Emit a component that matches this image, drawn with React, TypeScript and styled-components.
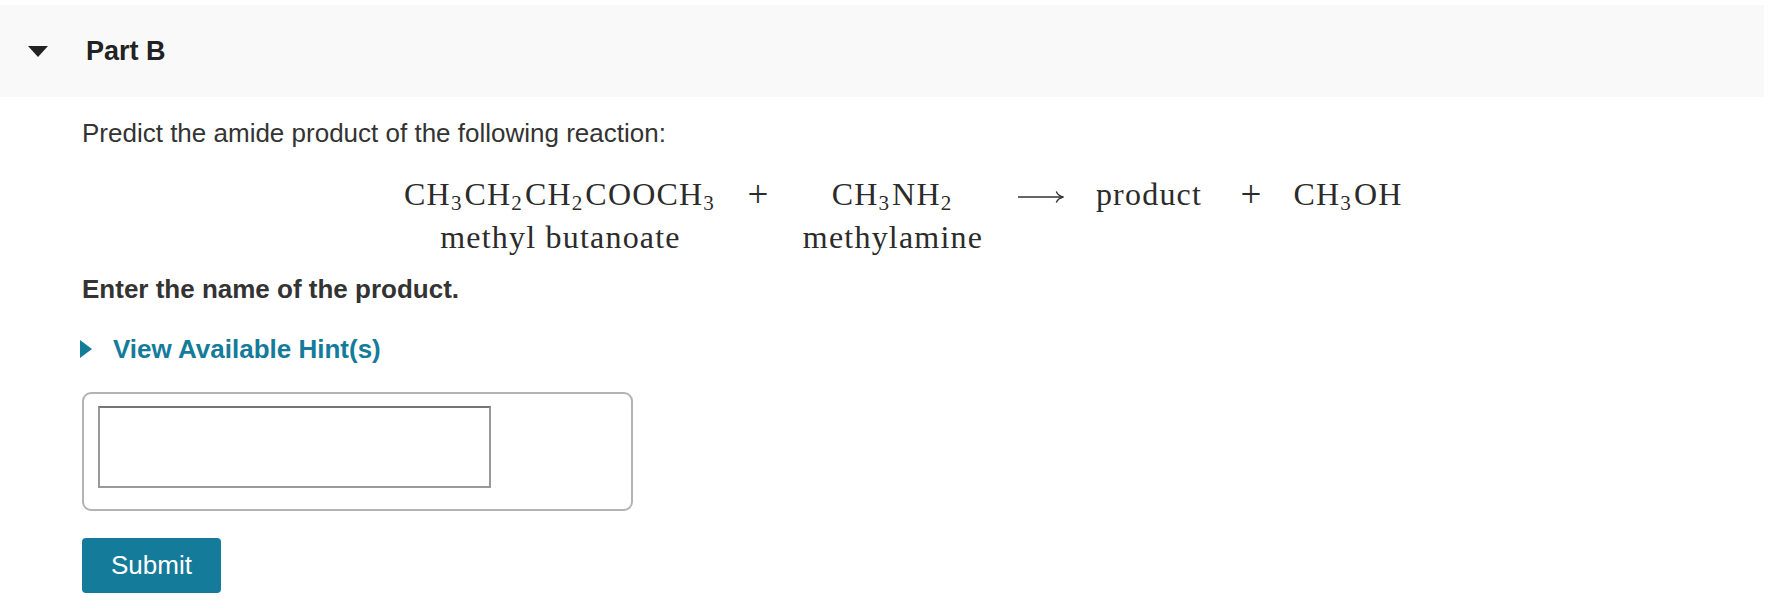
import React from 'react';
import styled, {createGlobalStyle} from 'styled-components';

const GlobalStyle = createGlobalStyle`
  html, body {
    margin: 0;
    padding: 0;
    background: #fff;
  }
  body {
    font-family: "Liberation Sans", Arial, Helvetica, sans-serif;
    color: #333;
  }
`;

const Page = styled.div`
  width: 1764px;
  padding-top: 5px;
`;

const PartHeader = styled.div`
  display: flex;
  align-items: center;
  height: 92px;
  padding-left: 28px;
  background: #f9f9f9;
`;

const Caret = styled.span<{$dir: 'down' | 'right'; $color: string}>`
  display: inline-block;
  width: 0;
  height: 0;
  flex: none;
  ${({$dir, $color}) =>
    $dir === 'down'
      ? `
    border-left: 10px solid transparent;
    border-right: 10px solid transparent;
    border-top: 11px solid ${$color};
  `
      : `
    border-top: 9.5px solid transparent;
    border-bottom: 9.5px solid transparent;
    border-left: 12px solid ${$color};
  `}
`;

const PartTitle = styled.h2`
  margin: 0 0 0 38px;
  font-size: 27px;
  line-height: 31px;
  font-weight: bold;
  color: #222;
`;

const Body = styled.div`
  padding: 21px 0 0 82px;
`;

const Prompt = styled.p<{$bold?: boolean; $gap?: number}>`
  margin: ${({$gap}) => $gap ?? 0}px 0 0;
  font-size: 26px;
  line-height: 30px;
  font-weight: ${({$bold}) => ($bold ? 'bold' : 'normal')};
  color: #333;
`;

const Reaction = styled.div`
  display: grid;
  grid-template-columns: 335px 60px 210px 85px 132px 72px 122px;
  grid-template-rows: 43px 43px;
  justify-items: center;
  margin: 25px 0 0 311px;
  font-family: "Liberation Serif", "Times New Roman", serif;
  font-size: 32px;
  line-height: 43px;
  letter-spacing: 1.2px;
  color: #2b2b2b;
`;

const Term = styled.span<{$col: number; $row?: number}>`
  grid-column: ${({$col}) => $col};
  grid-row: ${({$row}) => $row ?? 1};
  white-space: nowrap;
`;

const Plus = styled(Term)`
  font-size: 37px;
  letter-spacing: 0;
`;

const Sub = styled.sub`
  font-size: 0.66em;
  vertical-align: -0.22em;
  line-height: 0;
  letter-spacing: 0;
  margin-right: 3px;
`;

const ArrowIcon = styled.svg`
  vertical-align: 2px;
`;

const HintToggle = styled.div`
  display: flex;
  align-items: center;
  gap: 21px;
  margin: 30px 0 0 -2px;
  font-size: 26px;
  line-height: 30px;
  font-weight: bold;
  color: #157b9b;
  cursor: pointer;
`;

const AnswerBox = styled.div`
  box-sizing: border-box;
  width: 551px;
  height: 119px;
  margin-top: 28px;
  padding: 12px 14px;
  border: 2px solid #b3b3b3;
  border-radius: 9px;
`;

const AnswerInput = styled.input`
  display: block;
  box-sizing: border-box;
  width: 393px;
  height: 82px;
  margin: 0;
  padding: 0 10px;
  border: 2px solid #999;
  border-top-color: #767676;
  border-radius: 0;
  background: #fff;
  font-family: "Liberation Sans", Arial, sans-serif;
  font-size: 26px;
  outline: none;
`;

const SubmitButton = styled.button`
  display: block;
  width: 139px;
  height: 55px;
  margin-top: 27px;
  padding: 0;
  border: none;
  border-radius: 4px;
  background: #157b9b;
  color: #fff;
  font-family: "Liberation Sans", Arial, sans-serif;
  font-size: 26px;
  cursor: pointer;
`;

const Arrow = () => (
  <ArrowIcon width="46" height="12" viewBox="0 0 46 12">
    <path d="M0 6 H45" stroke="#333" strokeWidth="1.4" fill="none" />
    <path
      d="M38.5 1 Q40.5 5 45.5 6 Q40.5 7 38.5 11"
      stroke="#333"
      strokeWidth="1.4"
      fill="none"
      strokeLinecap="round"
    />
  </ArrowIcon>
);

const App = () => (
  <>
    <GlobalStyle />
    <Page>
      <PartHeader>
        <Caret $dir="down" $color="#222" />
        <PartTitle>Part B</PartTitle>
      </PartHeader>
      <Body>
        <Prompt>Predict the amide product of the following reaction:</Prompt>
        <Reaction>
          <Term $col={1}>
            CH<Sub>3</Sub>CH<Sub>2</Sub>CH<Sub>2</Sub>COOCH<Sub>3</Sub>
          </Term>
          <Plus $col={2}>+</Plus>
          <Term $col={3}>
            CH<Sub>3</Sub>NH<Sub>2</Sub>
          </Term>
          <Term $col={4}>
            <Arrow />
          </Term>
          <Term $col={5}>product</Term>
          <Plus $col={6}>+</Plus>
          <Term $col={7}>
            CH<Sub>3</Sub>OH
          </Term>
          <Term $col={1} $row={2}>
            methyl butanoate
          </Term>
          <Term $col={3} $row={2}>
            methylamine
          </Term>
        </Reaction>
        <Prompt $bold $gap={15}>
          Enter the name of the product.
        </Prompt>
        <HintToggle>
          <Caret $dir="right" $color="#157b9b" />
          <span>View Available Hint(s)</span>
        </HintToggle>
        <AnswerBox>
          <AnswerInput type="text" aria-label="product name" />
        </AnswerBox>
        <SubmitButton type="button">Submit</SubmitButton>
      </Body>
    </Page>
  </>
);

export default App;
